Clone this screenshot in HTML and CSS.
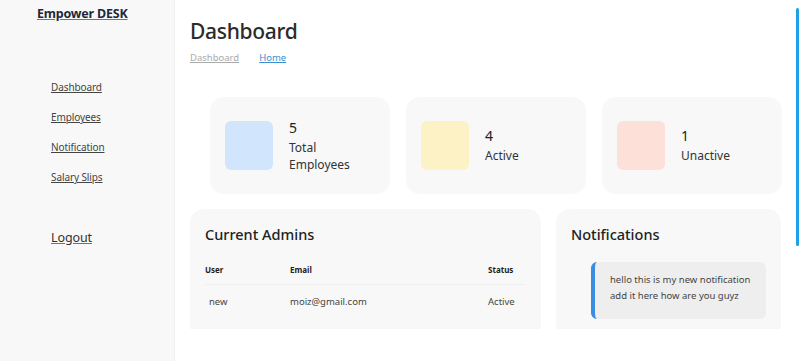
FILE: index.html
```html
<!DOCTYPE html>
<html lang="en">
<head>
	<meta charset="UTF-8">
	<title>Empower DESK</title>
	<link rel="stylesheet" href="styles.css">
</head>
<body>
	<div class="app">
		<aside class="sidebar">
			<a class="brand" href="#">Empower DESK</a>
			<ul class="nav">
				<li><a href="#">Dashboard</a></li>
				<li><a href="#">Employees</a></li>
				<li><a href="#">Notification</a></li>
				<li><a href="#">Salary Slips</a></li>
			</ul>
			<a class="logout" href="#">Logout</a>
		</aside>
		<main class="main">
			<h1 class="title">Dashboard</h1>
			<p class="crumbs">
				<a class="crumb" href="#">Dashboard</a>
				<a class="crumb home" href="#">Home</a>
			</p>
			<div class="stats">
				<div class="stat">
					<div class="stat-icon blue"></div>
					<div class="stat-text">
						<div class="stat-num">5</div>
						<div class="stat-label">Total<br>Employees</div>
					</div>
				</div>
				<div class="stat">
					<div class="stat-icon yellow"></div>
					<div class="stat-text">
						<div class="stat-num">4</div>
						<div class="stat-label">Active</div>
					</div>
				</div>
				<div class="stat">
					<div class="stat-icon red"></div>
					<div class="stat-text">
						<div class="stat-num">1</div>
						<div class="stat-label">Unactive</div>
					</div>
				</div>
			</div>
			<div class="panels">
				<div class="panel admins">
					<h2 class="panel-title">Current Admins</h2>
					<table class="table">
						<thead>
							<tr><th class="c-user">User</th><th class="c-email">Email</th><th class="c-status">Status</th></tr>
						</thead>
						<tbody>
							<tr><td class="c-user"><span class="pad">new</span></td><td>moiz@gmail.com</td><td>Active</td></tr>
						</tbody>
					</table>
				</div>
				<div class="panel notes">
					<h2 class="panel-title">Notifications</h2>
					<div class="note">hello this is my new notification add it here how are you guyz</div>
				</div>
			</div>
		</main>
		<div class="scroll"></div>
	</div>
</body>
</html>
```

FILE: styles.css
```css
*{
	margin: 0;
	padding: 0;
	box-sizing: border-box;
}
body{
	width: 800px;
	height: 361px;
	overflow: hidden;
	font-family: "Noto Sans", "Open Sans", sans-serif;
	color: #333;
	background: #fff;
}
.app{
	display: flex;
	height: 361px;
	position: relative;
}
.sidebar{
	width: 175px;
	flex-shrink: 0;
	background: #f8f8f8;
	border-right: 1px solid #f0f0f0;
	padding-top: 5px;
}
.brand{
	display: block;
	width: max-content;
	margin-left: 37px;
	font-size: 12.5px;
	font-weight: 700;
	color: #1e2a3a;
	text-decoration: underline;
	text-decoration-color: #3b8aa0;
	letter-spacing: -0.2px;
}
.nav{
	list-style: none;
	margin-top: 52px;
	padding-left: 51px;
}
.nav li{
	height: 30px;
}
.nav a, .logout{
	font-size: 10px;
	color: #444;
	text-decoration: underline;
	letter-spacing: -0.1px;
}
.logout{
	display: block;
	margin: 35px 0 0 51px;
	font-size: 12.5px;
	color: #333;
	text-decoration-color: #b55;
}
.main{
	flex: 1;
	padding: 16px 18px 0 15px;
}
.title{
	font-size: 21px;
	font-weight: 500;
	color: #2b2b2b;
	letter-spacing: -0.3px;
	line-height: 30px;
}
.crumbs{
	margin-top: 5px;
	font-size: 9.5px;
	display: flex;
	gap: 20px;
}
.crumb{
	color: #aaa;
	text-decoration: underline;
}
.crumb.home{
	color: #3a8fd0;
}
.stats{
	display: flex;
	gap: 16px;
	margin: 33px 0 0 20px;
}
.stat{
	width: 180px;
	height: 97px;
	background: #f8f8f8;
	border-radius: 14px;
	display: flex;
	align-items: center;
	padding-left: 15px;
	gap: 16px;
}
.stat-icon{
	width: 48px;
	height: 49px;
	border-radius: 6px;
}
.stat-icon.blue{ background: #d1e6fc; }
.stat-icon.yellow{ background: #fdf1c6; }
.stat-icon.red{ background: #fde0d8; }
.stat-num{
	font-size: 14px;
	line-height: 18px;
	color: #222;
}
.stat-label{
	font-size: 12px;
	line-height: 17px;
	margin-top: 2px;
	color: #333;
}
.panels{
	display: flex;
	gap: 15px;
	margin-top: 15px;
}
.panel{
	background: #f8f8f8;
	border-radius: 14px 14px 0 0;
	height: 120px;
	overflow: hidden;
	padding: 15px 15px 0;
}
.admins{
	width: 351px;
}
.notes{
	width: 225px;
}
.panel-title{
	font-size: 14.5px;
	font-weight: 500;
	color: #222;
	line-height: 20px;
}
.table{
	width: 320px;
	border-collapse: collapse;
	margin-top: 20px;
	font-size: 9.5px;
}
.table th{
	text-align: left;
	font-size: 8px;
	font-weight: 700;
	color: #222;
	padding: 0 0 9px;
	border-bottom: 1px solid #eee;
}
.table td{
	padding-top: 10px;
	color: #444;
}
.c-user{ width: 85px; }
.c-email{ width: 198px; }
.pad{ padding-left: 4px; }
.note{
	margin: 18px 0 0 20px;
	background: #eee;
	border-left: 4px solid #3a8de0;
	border-radius: 6px;
	padding: 10px 4px 8px 15px;
	font-size: 9.5px;
	line-height: 16px;
	color: #444;
	height: 57px;
}
.scroll{
	position: absolute;
	right: 1px;
	top: 8px;
	width: 3px;
	height: 238px;
	background: #1ea0e8;
	border-radius: 2px;
}
```
